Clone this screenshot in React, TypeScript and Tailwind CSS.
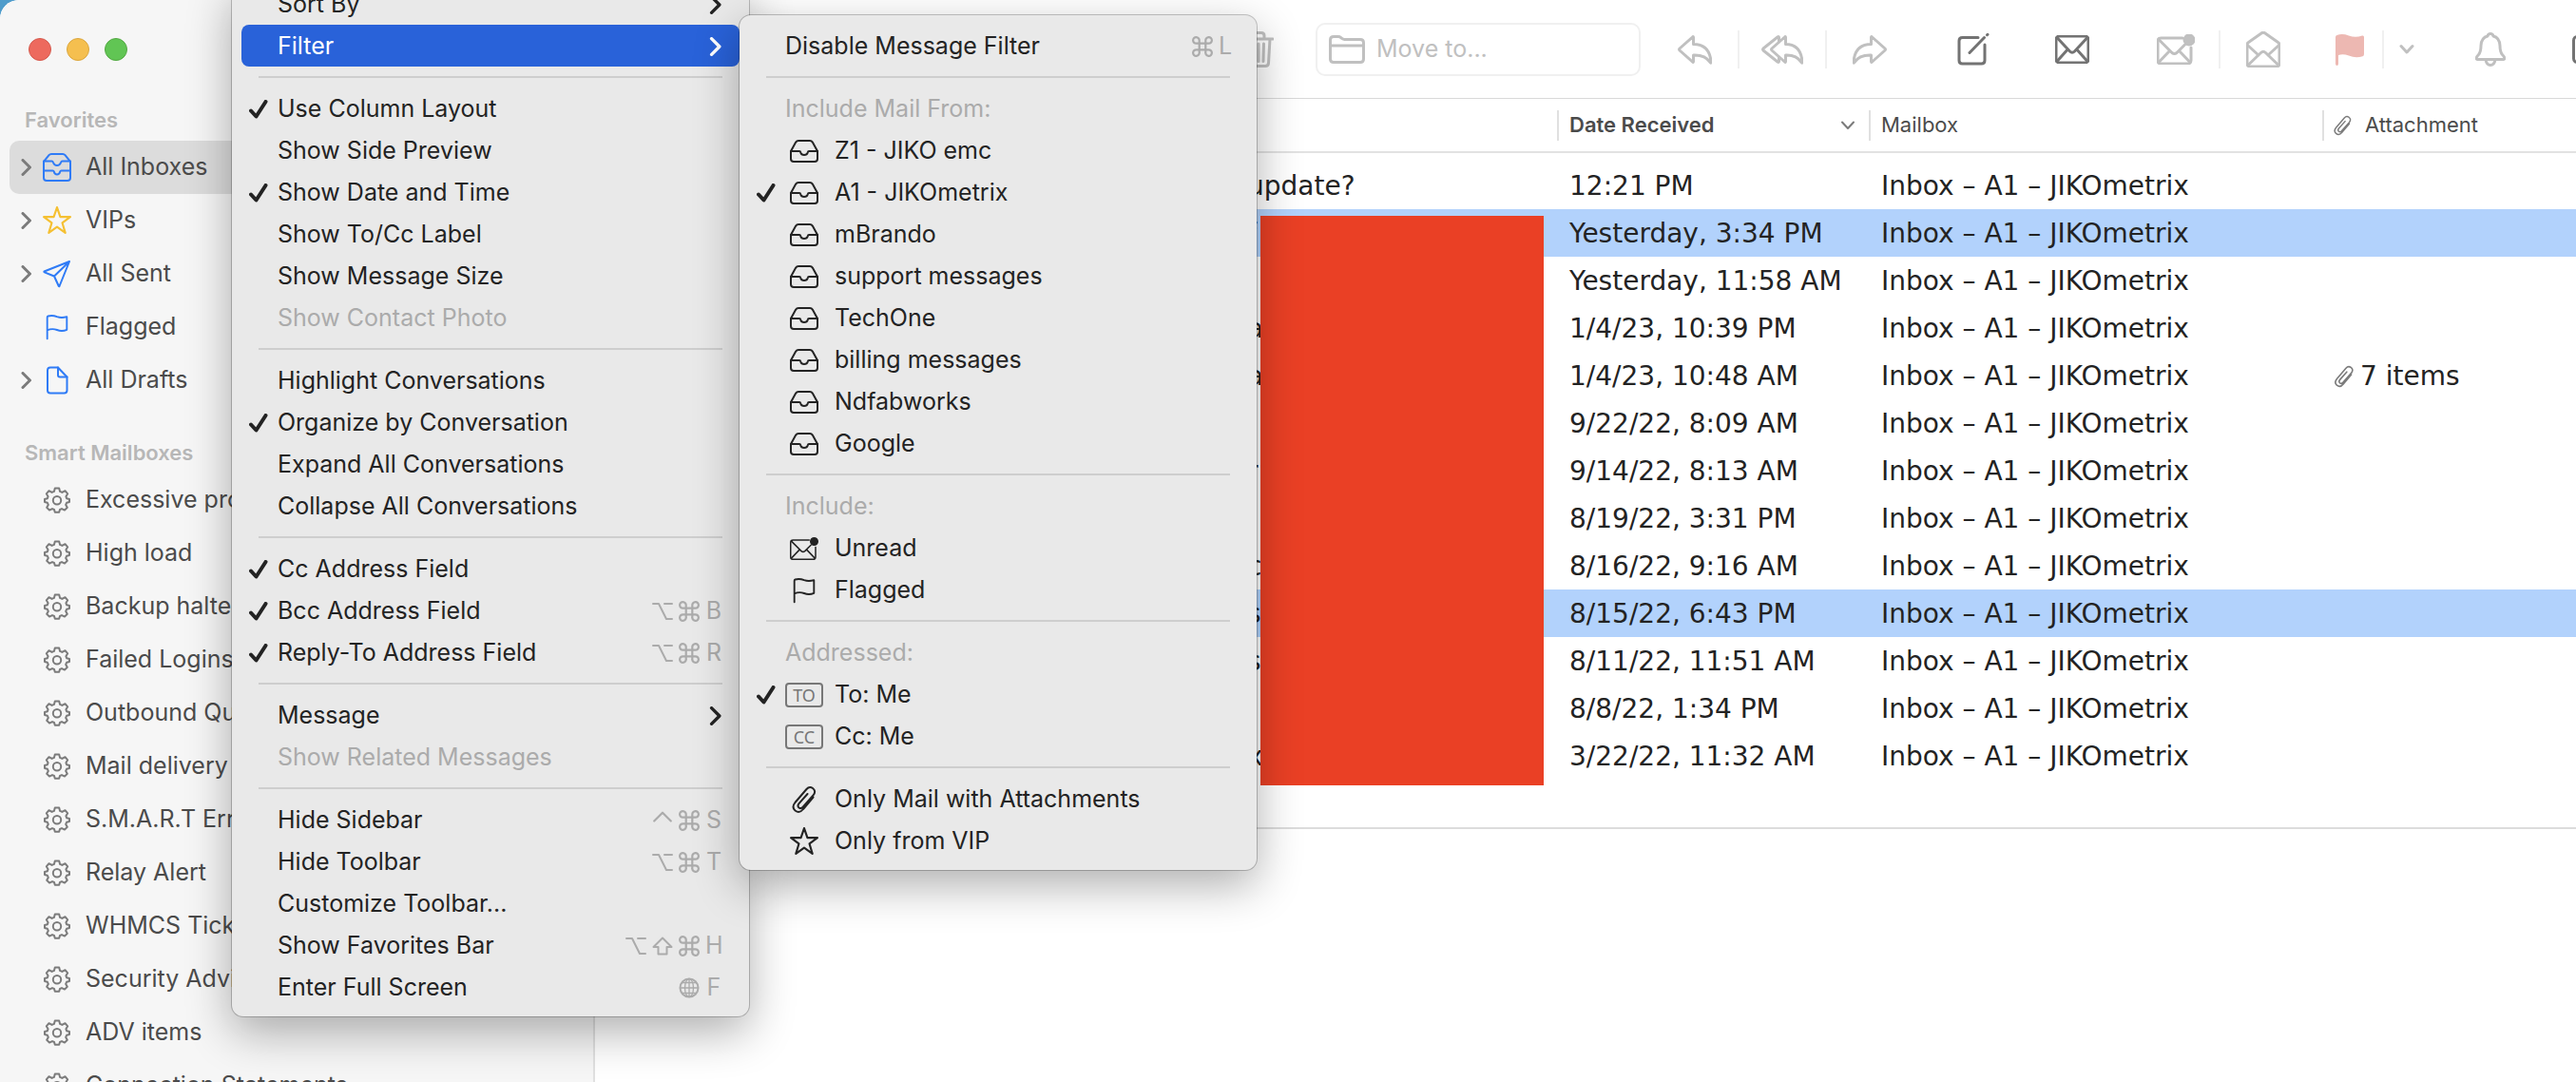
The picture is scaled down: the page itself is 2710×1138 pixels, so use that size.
import React from 'react';

const Icons: Record<string, { box: string; body: React.ReactNode }> = {
  tray: {
    box: '0 0 30 24',
    body: (
      <>
        <path d="M1 12 L6.2 2.6 Q7.2 1 9 1 H21 Q22.800 1 23.800 2.600 L29 12 V20 Q29 23 26 23 H4 Q1 23 1 20 Z" />
        <path d="M1 12 H10 Q11 12 11.300 13.500 Q12 16 15 16 Q18 16 18.700 13.500 Q19 12 20 12 H29" />
      </>
    ),
  },
  trays: {
    box: '0 0 30 30',
    body: (
      <>
        <path d="M1 9 L6.500 2.200 Q7.500 1 9 1 H21 Q22.500 1 23.500 2.200 L29 9 V26 Q29 29 26 29 H4 Q1 29 1 26 Z" />
        <path d="M1 8.500 H9.500 Q10.500 8.500 11 10 Q12 13 15 13 Q18 13 19 10 Q19.500 8.500 20.500 8.500 H29" />
        <path d="M1 18.500 H10.500 Q11.500 18.500 11.800 19.500 Q12.500 22.500 15 22.500 Q17.500 22.500 18.200 19.500 Q18.500 18.500 19.500 18.500 H29" />
      </>
    ),
  },
  star: {
    box: '1 1 28 28',
    body: <path d="M15 2 L18.200 11.400 H28 L20.200 17.300 L23.100 27 L15 21.200 L6.900 27 L9.800 17.300 L2 11.400 H11.800 Z" />,
  },
  plane: {
    box: '0 0 30 30',
    body: <path d="M28 2 L1.500 12.500 Q1 13 1.800 13.300 L12 17.500 L16.800 28 Q17.200 28.600 17.500 28 Z M28 2 L12 17.500" />,
  },
  flag: {
    box: '-2 -2 30 32',
    body: <path d="M2 27 V3 Q2 2 3 1.700 Q8 0.500 13 2.500 Q18 4.200 24 2.500 V17 Q18.500 19.300 13 17.200 Q7.500 15.200 2 17.500" />,
  },
  doc: {
    box: '0 0 24 30',
    body: (
      <>
        <path d="M5 1.500 H13 L22.500 11.500 V25.500 Q22.500 28.500 19.500 28.500 H5 Q2 28.500 2 25.500 V4.500 Q2 1.500 5 1.500 Z" />
        <path d="M13 1.500 V9.500 Q13 11.500 15 11.500 H22.500" />
      </>
    ),
  },
  gear: {
    box: '-1 -1 30 30',
    body: (
      <>
        <path d="M11.800 1.500 H16.200 L17.100 4.900 L19.400 5.900 L22.500 4.200 L25.200 7.300 L23.400 10.200 L24.100 12.200 L27 13 V16 L24.100 16.800 L23.200 18.900 L24.800 21.800 L22 24.600 L19 23.100 L17 24 L16.200 26.800 H11.800 L11 24 L9 23.100 L6 24.600 L3.200 21.800 L4.800 18.900 L3.900 16.800 L1 16 V13 L3.900 12.200 L4.600 10.200 L2.800 7.300 L5.500 4.200 L8.600 5.900 L10.900 4.900 Z" />
        <circle cx="14" cy="14.200" r="4.200" />
      </>
    ),
  },
  mail: {
    box: '0 0 36 30',
    body: (
      <>
        <rect x="1" y="1" width="34" height="28" rx="3.500" />
        <path d="M2 2.500 L15.500 17 Q18 19.500 20.500 17 L34 2.500 M2 27.500 L13.200 15 M34 27.500 L22.800 15" />
      </>
    ),
  },
  unread: {
    box: '0 0 40 32',
    body: (
      <>
        <path d="M27 4 H4.500 Q1 4 1 7.500 V27.500 Q1 31 4.500 31 H32.500 Q36 31 36 27.500 V14" />
        <path d="M2 5.500 L16 19.500 Q18.500 21.500 21 19.500 L29.500 11 M2 29.500 L13.500 17.500 M35 29.500 L23.500 17.500" />
        <circle cx="34" cy="6" r="5" fill="currentColor" />
      </>
    ),
  },
  openMail: {
    box: '0 0 36 38',
    body: (
      <>
        <path d="M1 14.500 Q1 12.500 2.500 11.500 L16 2 Q18 0.500 20 2 L33.500 11.500 Q35 12.500 35 14.500 V33.500 Q35 37 31.500 37 H4.500 Q1 37 1 33.500 Z" />
        <path d="M2 15 L13 25 M34 15 L23 25 M2 35.500 L15.500 22.500 Q18 20 20.500 22.500 L34 35.500" />
      </>
    ),
  },
  clip: {
    box: '0 0 26 30',
    body: (
      <path d="M22.500 12.500 L12 25 Q8 30 3.500 26.500 Q-0.500 23 3.500 18 L15.500 4 Q18.500 0.500 22 3 Q26 6 22.500 10.500 L11.500 23 Q9.500 25 7.500 23.500 Q5.500 21.500 7.500 19.200 L16.500 9" />
    ),
  },
  trash: {
    box: '0 0 32 38',
    body: (
      <>
        <path d="M1 8 H31 M10 8 V4.500 Q10 1.500 13 1.500 H19 Q22 1.500 22 4.500 V8 M4 8 L5.500 33.500 Q5.800 36.500 9 36.500 H23 Q26.200 36.500 26.500 33.500 L28 8" />
        <path d="M10.500 13 L11 31.500 M16 13 V31.500 M21.500 13 L21 31.500" />
      </>
    ),
  },
  folder: {
    box: '0 0 38 30',
    body: (
      <>
        <path d="M1.500 5 Q1.500 1.500 5 1.500 H10 Q11.500 1.500 12.500 2.500 L14 3.700 Q15 4.500 16.500 4.500 H33 Q36.500 4.500 36.500 8 V25 Q36.500 28.500 33 28.500 H5 Q1.500 28.500 1.500 25 Z" />
        <path d="M1.500 11 H36.500" />
      </>
    ),
  },
  reply: {
    box: '0 0 36 32',
    body: <path d="M15.500 3 Q16.500 2 16.500 3.500 V10.500 Q33.500 10.500 35 29 Q35 31 34 29.500 Q29 21.500 16.500 22 V28.500 Q16.500 30 15.500 29 L2 17 Q1 16 2 15 Z" />,
  },
  replyAll: {
    box: '0 0 44 32',
    body: (
      <>
        <path d="M24.500 3 Q25.500 2 25.500 3.500 V10.500 Q41.500 10.500 43 29 Q43 31 42 29.500 Q37 21.500 25.500 22 V28.500 Q25.500 30 24.500 29 L11 17 Q10 16 11 15 Z" />
        <path d="M18.500 8 V3.500 Q18.500 2 17 3 L2 15 Q1 16 2 17 L17 29 Q18.500 30 18.500 28.500 V24" />
      </>
    ),
  },
  forward: {
    box: '0 0 36 32',
    body: <path d="M20.500 3 Q19.500 2 19.500 3.500 V10.500 Q2.500 10.500 1 29 Q1 31 2 29.500 Q7 21.500 19.500 22 V28.500 Q19.500 30 20.500 29 L34 17 Q35 16 34 15 Z" />,
  },
  compose: {
    box: '0 0 34 34',
    body: (
      <>
        <path d="M22 4.500 H5.500 Q2 4.500 2 8 V28.500 Q2 32 5.500 32 H25.500 Q29 32 29 28.500 V12" />
        <path d="M13 20.500 L28.500 4.500 M31.500 1.700 L32 1.200" strokeWidth="3" />
      </>
    ),
  },
  flagFill: {
    box: '0 0 30 34',
    body: (
      <path
        stroke="none"
        fill="currentColor"
        d="M0 32 V4 Q0 2.500 1.500 2 Q7 0 14 2.500 Q21 5 28 2.500 Q30 2 30 4 V22 Q30 24 28.500 24.300 Q21 26.500 14 23.500 Q8 21.500 3 23 V32 Q3 34 1.500 34 Q0 34 0 32 Z"
      />
    ),
  },
  bell: {
    box: '0 0 32 36',
    body: (
      <>
        <path d="M2 28.500 Q1 28.500 1.200 27 Q1.500 25.500 3.500 23.500 Q6 20.500 6 14 Q6.500 5.500 13 4 Q13.500 1.500 16 1.500 Q18.500 1.500 19 4 Q25.500 5.500 26 14 Q26 20.500 28.500 23.500 Q30.500 25.500 30.800 27 Q31 28.500 30 28.500 Z" />
        <path d="M11 29 Q12 34.500 16 34.500 Q20 34.500 21 29" />
      </>
    ),
  },
  archive: {
    box: '0 0 36 30',
    body: <rect x="1.500" y="1.500" width="33" height="27" rx="4" />,
  },
  chevronRight: { box: '0 0 12 18', body: <path d="M2 1.500 L9.500 9 L2 16.500" /> },
  chevronDown: { box: '0 0 16 12', body: <path d="M2 2.500 L8 9 L14 2.500" /> },
  check: { box: '0 0 20 20', body: <path d="M2 11.500 L7.500 17.500 L17.500 2" /> },
  option: { box: '0 0 22 20', body: <path d="M1 2 H7 L15 18 H21 M13 2 H21" /> },
  command: {
    box: '0 0 20 20',
    body: (
      <path d="M7 7 H13 V13 H7 Z M7 7 H4.200 A3 3 0 1 1 7 4.200 Z M13 7 V4.200 A3 3 0 1 1 15.800 7 Z M13 13 H15.800 A3 3 0 1 1 13 15.800 Z M7 13 V15.800 A3 3 0 1 1 4.200 13 Z" />
    ),
  },
  shift: { box: '0 0 22 20', body: <path d="M11 1.500 L20.500 11 H15.500 V18.500 H6.500 V11 H1.500 Z" /> },
  control: { box: '0 0 20 20', body: <path d="M2 10.500 L10 2.500 L18 10.500" /> },
  globe: {
    box: '0 0 22 22',
    body: (
      <>
        <circle cx="11" cy="11" r="9.500" />
        <ellipse cx="11" cy="11" rx="4.500" ry="9.500" strokeWidth="1.300" />
        <path d="M11 1.500 V20.500 M1.500 11 H20.500 M3.500 5.500 H18.500 M3.500 16.500 H18.500" strokeWidth="1.300" />
      </>
    ),
  },
};

const Icon = ({ name, className = '', weight = 2 }: { name: string; className?: string; weight?: number }) => (
  <svg
    viewBox={Icons[name].box}
    className={`shrink-0 ${className}`}
    fill="none"
    stroke="currentColor"
    strokeWidth={weight}
    strokeLinecap="round"
    strokeLinejoin="round"
    aria-hidden="true"
  >
    {Icons[name].body}
  </svg>
);

type MenuEntry = {
  label: string;
  checked?: boolean;
  disabled?: boolean;
  active?: boolean;
  arrow?: boolean;
  icon?: string;
  badge?: string;
  keys?: string[];
};

const viewMenu: MenuEntry[][] = [
  [
    { label: 'Sort By', arrow: true },
    { label: 'Filter', arrow: true, active: true },
  ],
  [
    { label: 'Use Column Layout', checked: true },
    { label: 'Show Side Preview' },
    { label: 'Show Date and Time', checked: true },
    { label: 'Show To/Cc Label' },
    { label: 'Show Message Size' },
    { label: 'Show Contact Photo', disabled: true },
  ],
  [
    { label: 'Highlight Conversations' },
    { label: 'Organize by Conversation', checked: true },
    { label: 'Expand All Conversations' },
    { label: 'Collapse All Conversations' },
  ],
  [
    { label: 'Cc Address Field', checked: true },
    { label: 'Bcc Address Field', checked: true, keys: ['option', 'command', 'B'] },
    { label: 'Reply-To Address Field', checked: true, keys: ['option', 'command', 'R'] },
  ],
  [
    { label: 'Message', arrow: true },
    { label: 'Show Related Messages', disabled: true },
  ],
  [
    { label: 'Hide Sidebar', keys: ['control', 'command', 'S'] },
    { label: 'Hide Toolbar', keys: ['option', 'command', 'T'] },
    { label: 'Customize Toolbar...' },
    { label: 'Show Favorites Bar', keys: ['option', 'shift', 'command', 'H'] },
    { label: 'Enter Full Screen', keys: ['globe', 'F'] },
  ],
];

const filterMenu: MenuEntry[][] = [
  [{ label: 'Disable Message Filter', keys: ['command', 'L'] }],
  [
    { label: 'Include Mail From:', disabled: true },
    { label: 'Z1 - JIKO emc', icon: 'tray' },
    { label: 'A1 - JIKOmetrix', icon: 'tray', checked: true },
    { label: 'mBrando', icon: 'tray' },
    { label: 'support messages', icon: 'tray' },
    { label: 'TechOne', icon: 'tray' },
    { label: 'billing messages', icon: 'tray' },
    { label: 'Ndfabworks', icon: 'tray' },
    { label: 'Google', icon: 'tray' },
  ],
  [
    { label: 'Include:', disabled: true },
    { label: 'Unread', icon: 'unread' },
    { label: 'Flagged', icon: 'flag' },
  ],
  [
    { label: 'Addressed:', disabled: true },
    { label: 'To: Me', badge: 'TO', checked: true },
    { label: 'Cc: Me', badge: 'CC' },
  ],
  [
    { label: 'Only Mail with Attachments', icon: 'clip' },
    { label: 'Only from VIP', icon: 'star' },
  ],
];

const favorites = [
  { label: 'All Inboxes', icon: 'trays', color: 'text-[#2f7bf6]', arrow: true, selected: true },
  { label: 'VIPs', icon: 'star', color: 'text-[#f5c032]', arrow: true },
  { label: 'All Sent', icon: 'plane', color: 'text-[#2f7bf6]', arrow: true },
  { label: 'Flagged', icon: 'flag', color: 'text-[#2f7bf6]' },
  { label: 'All Drafts', icon: 'doc', color: 'text-[#2f7bf6]', arrow: true },
];

const smartMailboxes = [
  'Excessive proc',
  'High load',
  'Backup halted',
  'Failed Logins',
  'Outbound Queue',
  'Mail delivery',
  'S.M.A.R.T Errors',
  'Relay Alert',
  'WHMCS Tickets',
  'Security Advisory',
  'ADV items',
  'Connection Statements',
];

const messages = [
  { subject: 'update?', date: '12:21 PM' },
  { subject: 'f', date: 'Yesterday, 3:34 PM', selected: true },
  { subject: 'i', date: 'Yesterday, 11:58 AM' },
  { subject: 'a', date: '1/4/23, 10:39 PM' },
  { subject: 'a', date: '1/4/23, 10:48 AM', attachment: '7 items' },
  { subject: 'i', date: '9/22/22, 8:09 AM' },
  { subject: 'r', date: '9/14/22, 8:13 AM' },
  { subject: 'l', date: '8/19/22, 3:31 PM' },
  { subject: 'c', date: '8/16/22, 9:16 AM' },
  { subject: 's', date: '8/15/22, 6:43 PM', selected: true },
  { subject: 's', date: '8/11/22, 11:51 AM' },
  { subject: ',', date: '8/8/22, 1:34 PM' },
  { subject: 'x', date: '3/22/22, 11:32 AM' },
];

const MenuItem = ({ item, keyClass }: { item: MenuEntry; keyClass: string }) => {
  const tone = item.active ? 'bg-[#2962d9] text-white' : item.disabled ? 'text-[#ababab]' : 'text-[#232323]';
  return (
    <button
      type="button"
      role="menuitem"
      disabled={item.disabled}
      className={`flex h-11 w-full items-center rounded-lg pt-[2px] pr-[18px] pl-2 text-left whitespace-nowrap ${tone}`}
    >
      <span className="flex w-[30px] shrink-0 items-center">
        {item.checked && <Icon name="check" className="size-5" weight={4} />}
      </span>
      {item.icon && (
        <span className="mr-3 flex w-10 shrink-0 justify-center">
          <Icon name={item.icon} className="size-[30px]" />
        </span>
      )}
      {item.badge && (
        <span className="mr-3 flex h-[26px] w-10 shrink-0 items-center justify-center rounded-sm border-2 border-[#777777] font-['Noto_Sans',sans-serif] text-lg leading-none text-[#777777]">
          {item.badge}
        </span>
      )}
      {item.label}
      {item.arrow && <Icon name="chevronRight" className="ml-auto h-5 w-[14px]" weight={3} />}
      {item.keys && (
        <span className="ml-auto flex items-center gap-[6px] text-[#ababab]">
          {item.keys.map((key) =>
            Icons[key] ? (
              <Icon key={key} name={key} className="size-[22px]" />
            ) : (
              <span key={key} className={`text-center ${keyClass}`}>
                {key}
              </span>
            ),
          )}
        </span>
      )}
    </button>
  );
};

const Menu = ({
  groups,
  label,
  className,
  keyClass,
}: {
  groups: MenuEntry[][];
  label: string;
  className: string;
  keyClass: string;
}) => (
  <div
    role="menu"
    aria-label={label}
    className={`absolute w-[544px] rounded-xl bg-[#e9e9e9] px-[10px] pb-[9px] text-[25px] shadow-[0_0_0_1px_rgba(0,0,0,0.22),0_16px_48px_rgba(0,0,0,0.32)] ${className}`}
  >
    {groups.map((group, index) => (
      <div key={index}>
        {index > 0 && <div className="mx-[18px] my-[10px] h-[2px] bg-[#cecece]" />}
        {group.map((item) => (
          <MenuItem key={item.label} item={item} keyClass={keyClass} />
        ))}
      </div>
    ))}
  </div>
);

const SidebarItem = ({
  label,
  icon,
  color,
  arrow,
  selected,
}: {
  label: string;
  icon: string;
  color: string;
  arrow?: boolean;
  selected?: boolean;
}) => (
  <li>
    <a
      href="#"
      className={`flex h-14 items-center rounded-[10px] pl-3 whitespace-nowrap ${selected ? 'bg-[#dcdcdc]' : ''}`}
    >
      <span className="w-[22px] text-[#7b7b7b]">
        {arrow && <Icon name="chevronRight" className="h-[18px] w-3" weight={3} />}
      </span>
      <span className={`mr-[14px] flex w-8 justify-center ${color}`}>
        <Icon name={icon} className="size-[30px]" />
      </span>
      {label}
    </a>
  </li>
);

const Sidebar = () => (
  <aside className="w-[626px] shrink-0 border-r-2 border-[#e0e0e0] bg-[#f6f6f6] px-[10px] text-[25px] text-[#4b4b4b]">
    <div className="flex h-[104px] items-center gap-4 pl-5">
      <button type="button" aria-label="Close" className="size-6 rounded-full border border-[#d55a4e] bg-[#ed6a5e]" />
      <button type="button" aria-label="Minimize" className="size-6 rounded-full border border-[#dba73e] bg-[#f5bf4f]" />
      <button type="button" aria-label="Zoom" className="size-6 rounded-full border border-[#53a843] bg-[#61c554]" />
    </div>
    <h2 className="flex h-11 items-center pl-4 text-[22px] font-semibold text-[#b7b7b7]">Favorites</h2>
    <ul>
      {favorites.map((item) => (
        <SidebarItem key={item.label} {...item} />
      ))}
    </ul>
    <h2 className="mt-[26px] flex h-11 items-center pl-4 text-[22px] font-semibold text-[#b7b7b7]">Smart Mailboxes</h2>
    <ul>
      {smartMailboxes.map((label) => (
        <SidebarItem key={label} label={label} icon="gear" color="text-[#7b7b7b]" />
      ))}
    </ul>
  </aside>
);

const ToolButton = ({
  icon,
  label,
  size,
  className = 'w-[90px] text-[#c0c0c0]',
}: {
  icon: string;
  label: string;
  size: string;
  className?: string;
}) => (
  <button type="button" aria-label={label} className={`flex h-14 shrink-0 items-center justify-center ${className}`}>
    <Icon name={icon} className={size} weight={3} />
  </button>
);

const Divider = () => <div className="h-10 w-[2px] shrink-0 bg-[#f0f0f0]" />;

const Toolbar = () => (
  <header className="flex h-[104px] items-center gap-3 overflow-hidden border-b border-[#d9d9d9] pl-[650px]">
    <ToolButton icon="trash" label="Delete" size="h-[38px] w-8" className="w-24 text-[#c0c0c0]" />
    <label className="flex h-14 w-[342px] shrink-0 items-center gap-3 rounded-[10px] border-2 border-[#f0f0f0] pl-3 text-[#c0c0c0]">
      <Icon name="folder" className="h-[30px] w-[38px]" weight={3} />
      <input
        type="text"
        aria-label="Move to"
        placeholder="Move to..."
        className="w-60 text-[25px] outline-none placeholder:text-[#c0c0c0]"
      />
    </label>
    <div className="flex items-center">
      <ToolButton icon="reply" label="Reply" size="h-8 w-9" />
      <Divider />
      <ToolButton icon="replyAll" label="Reply All" size="h-8 w-11" />
      <Divider />
      <ToolButton icon="forward" label="Forward" size="h-8 w-9" />
    </div>
    <div className="flex items-center">
      <ToolButton icon="compose" label="New Message" size="size-[34px]" className="w-[104px] text-[#737373]" />
      <ToolButton icon="mail" label="Get Mail" size="h-[30px] w-9" className="w-[104px] text-[#737373]" />
    </div>
    <div className="flex items-center">
      <ToolButton icon="unread" label="Mark as Unread" size="h-8 w-10" />
      <Divider />
      <ToolButton icon="openMail" label="Mark as Read" size="h-[38px] w-9" />
    </div>
    <div className="flex items-center">
      <ToolButton icon="flagFill" label="Flag" size="h-[34px] w-[30px]" className="w-[68px] text-[#edb8b2]" />
      <Divider />
      <ToolButton icon="chevronDown" label="Flag Colors" size="h-3 w-4" className="w-12 text-[#c0c0c0]" />
    </div>
    <div className="flex items-center">
      <ToolButton icon="bell" label="Mute" size="h-9 w-8" className="w-[104px] text-[#c0c0c0]" />
      <ToolButton icon="archive" label="Archive" size="h-[30px] w-9" className="w-[104px] text-[#737373]" />
    </div>
  </header>
);

const MessageTable = () => (
  <div className="relative border-b-2 border-[#dcdcdc] pb-[50px]">
    <table className="w-full table-fixed border-collapse text-left text-[#232323]">
      <colgroup>
        <col className="w-[1012px]" />
        <col className="w-[328px]" />
        <col className="w-[477px]" />
        <col />
      </colgroup>
      <thead className="text-[22px] text-[#4b4b4b]">
        <tr className="h-[56px] border-b-2 border-[#e2e2e2]">
          <th aria-label="Subject" />
          <th className="font-semibold">
            <div className="flex h-8 items-center justify-between border-l-2 border-[#e0e0e0] pr-[14px] pl-[11px]">
              Date Received
              <Icon name="chevronDown" className="h-3 w-4 text-[#7b7b7b]" />
            </div>
          </th>
          <th className="font-normal">
            <div className="flex h-8 items-center border-l-2 border-[#e0e0e0] pl-[11px]">Mailbox</div>
          </th>
          <th className="font-normal">
            <div className="flex h-8 items-center gap-[14px] border-l-2 border-[#e0e0e0] pl-[10px]">
              <Icon name="clip" className="h-[22px] w-[19px] text-[#7b7b7b]" />
              Attachment
            </div>
          </th>
        </tr>
        <tr className="h-[10px]" />
      </thead>
      <tbody className="font-['DejaVu_Sans',sans-serif] text-[28px] leading-[48px]">
        {messages.map((message) => (
          <tr key={message.date} className={`h-[50px] ${message.selected ? 'bg-[#b2d2fc]' : ''}`}>
            <td className="pt-[2px] pb-0 pl-[686px]">{message.subject}</td>
            <td className="pt-[2px] pb-0 pl-[13px] whitespace-nowrap">{message.date}</td>
            <td className="pt-[2px] pb-0 pl-[13px] whitespace-nowrap">Inbox – A1 – JIKOmetrix</td>
            <td className="pt-[2px] pb-0 pl-3">
              {message.attachment && (
                <span className="flex items-center gap-[6px]">
                  <Icon name="clip" className="h-6 w-[22px] text-[#7b7b7b]" />
                  {message.attachment}
                </span>
              )}
            </td>
          </tr>
        ))}
      </tbody>
    </table>
    {/* Redacted subjects */}
    <div className="absolute top-[123px] left-[700px] h-[599px] w-[298px] bg-[#ea4025]" />
  </div>
);

const App = () => {
  return (
    <div className="h-screen overflow-hidden bg-[#4f9ccb] font-['Inter',sans-serif]">
      <div className="relative flex h-full overflow-hidden rounded-tl-[20px] bg-white">
        <Sidebar />
        <main className="min-w-0 flex-1">
          <Toolbar />
          <MessageTable />
        </main>
        <Menu groups={viewMenu} label="View" className="-top-[18px] left-[244px]" keyClass="w-[18px]" />
        <Menu groups={filterMenu} label="Filter" className="top-4 left-[778px] pt-[10px]" keyClass="w-3" />
      </div>
    </div>
  );
};

export default App;
